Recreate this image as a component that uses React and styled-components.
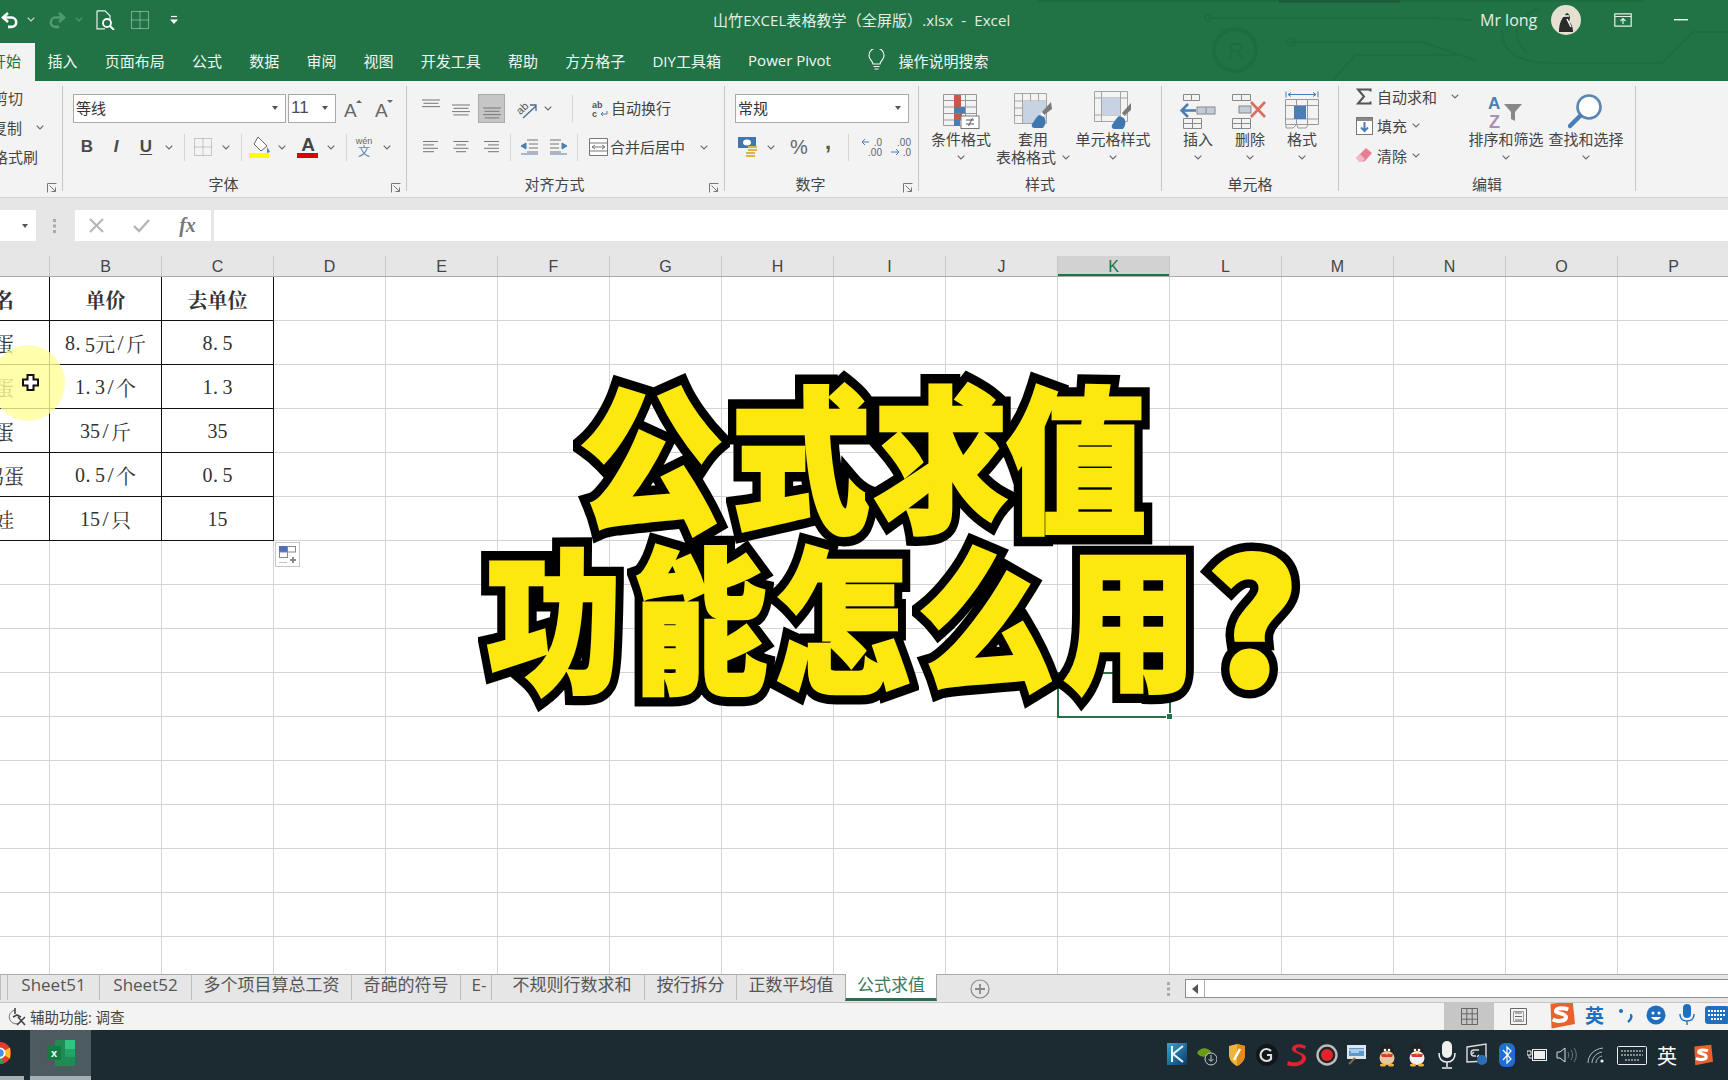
import React from 'react';
import styled, { createGlobalStyle } from 'styled-components';

const CJK = '"Open Sans", "Noto Sans CJK SC", sans-serif';
const Global = createGlobalStyle`
  html, body { margin: 0; padding: 0; background: #fff; }
  body { font-family: ${CJK}; }
`;

const Page = styled.div`
  position: relative; width: 1728px; height: 1080px; overflow: hidden;
  display: flex; flex-direction: column; background: #fff;
`;

/* ---------- title ---------- */
const GreenTop = styled.div`position: relative; background: #217346; height: 81px; display: flex; flex-direction: column; flex: none;`;
const Circuit = styled.svg`position: absolute; right: 0; top: 0; pointer-events: none;`;
const TitleBar = styled.div`position: relative; height: 43px; box-sizing: border-box; padding-bottom: 4px; display: flex; align-items: center; color: #e4efe8; font-size: 15px;`;
const Qat = styled.div`display: flex; align-items: center; width: 713px; flex: none;`;
const QatSlot = styled.div`width: ${p => p.$w}px; display: flex; justify-content: center; align-items: center; flex: none;`;
const DocTitle = styled.div`white-space: pre; width: 767px; flex: none; letter-spacing: .1px;`;
const UserName = styled.div`width: 71px; flex: none; font-size: 16px;`;
const WinBtn = styled.div`flex: none; width: ${p => p.$w}px; display: flex; justify-content: center;`;

const TabBar = styled.div`position: relative; height: 38px; display: flex; align-items: center; color: #f2f7f4; font-size: 15px;`;
const HomeTab = styled.div`width: 35px; height: 38px; background: #f3f3f3; color: #217346; overflow: hidden; display: flex; justify-content: flex-end; align-items: center; padding: 0 14px 4px 0; box-sizing: border-box; white-space: nowrap; flex: none; margin-right: -1px;`;
const MenuItem = styled.div`padding: 0 13.6px 4px; white-space: nowrap;`;
const SearchHint = styled.div`display: flex; align-items: center; gap: 13px; margin-left: 24px; padding-bottom: 4px; white-space: nowrap;`;

/* ---------- ribbon ---------- */
const Ribbon = styled.div`background: #f3f3f3; border-bottom: 1px solid #d4d4d4; display: flex; padding-top: 5px; flex: none; height: 111px; font-size: 15px; color: #444;`;
const Group = styled.div`position: relative; width: ${p => p.$w}px; height: 105px; flex: none; border-right: 1px solid #c6c6c6; box-sizing: border-box; display: flex; flex-direction: column;`;
const GroupBody = styled.div`flex: 1; min-height: 0; display: flex; flex-direction: ${p => p.$row ? 'row' : 'column'}; padding-left: ${p => p.$pl || 0}px; padding-top: ${p => p.$pt || 0}px;`;
const GroupLabel = styled.div`height: 10px; line-height: 10px; margin-bottom: 2px; text-align: center; padding-right: ${p => p.$launcher ? 22 : 0}px; color: #444; font-size: 15px; white-space: nowrap;`;
const Launcher = styled.svg`position: absolute; right: 5px; bottom: -2px;`;
const ToolRow = styled.div`display: flex; align-items: center; height: ${p => p.$h}px; flex: none; margin-top: ${p => p.$mt || 0}px;`;
const Slot = styled.div`width: ${p => p.$w}px; flex: none; display: flex; align-items: center; justify-content: center; height: 100%;`;
const Sep = styled.div`width: ${p => p.$w}px; flex: none; height: 27px; position: relative; &::after { content: ''; position: absolute; left: 50%; top: 0; bottom: 0; width: 1px; background: #d6d6d6; }`;
const Combo = styled.div`width: ${p => p.$w}px; height: 29px; box-sizing: border-box; flex: none; border: 1px solid #a9a9a9; background: #fff; display: flex; align-items: center; justify-content: space-between; padding: 0 7px 2px 2px; margin-right: 2px; font-size: 15px; color: #333;`;
const Caret = styled.span`width: 0; height: 0; border-left: 3.5px solid transparent; border-right: 3.5px solid transparent; border-top: 4px solid #555;`;
const ClipStack = styled.div`margin-top: -3px; display: flex; flex-direction: column;`;
const ClipRow = styled.div`height: 29.5px; display: flex; align-items: center; justify-content: flex-end; gap: 9px; white-space: nowrap; padding-right: ${p => p.$pr}px;`;
const Letter = styled.span`font-family: "Liberation Sans", sans-serif; font-size: 17px; color: #4a4a4a; font-weight: ${p => p.$b ? 700 : 400}; font-style: ${p => p.$i ? 'italic' : 'normal'}; text-decoration: ${p => p.$u ? 'underline' : 'none'}; text-underline-offset: 2px;`;
const Active = styled.div`width: 27px; height: 29px; background: #c6c6c6; border: 1px solid #ababab; box-sizing: border-box; display: flex; align-items: center; justify-content: center;`;
const TextBtn = styled.div`display: flex; align-items: center; height: 100%; padding-bottom: 2px; box-sizing: border-box; white-space: nowrap; color: #444;`;
const Big = styled.div`width: ${p => p.$w}px; flex: none; display: flex; flex-direction: column; align-items: center; margin-right: ${p => p.$mr || 0}px;`;
const BigIcon = styled.div`height: 43px; margin-bottom: 1px; display: flex; align-items: flex-end; justify-content: center;`;
const BigLine = styled.div`height: 18px; line-height: 18px; white-space: nowrap; display: flex; align-items: center; gap: 6px; color: #444;`;
const Stack = styled.div`width: 116px; flex: none; margin-top: -1.5px; display: flex; flex-direction: column;`;
const StackRow = styled.div`height: 24px; display: flex; align-items: center; margin-bottom: 5.3px; white-space: nowrap;`;
const StackIcon = styled.div`width: 26px; display: flex; justify-content: center; flex: none;`;
const Percent = styled.span`font-family: "Liberation Sans", sans-serif; font-size: 20px; color: #666;`;
const Comma = styled(Percent)`font-weight: 700; position: relative; top: -5px; font-size: 22px; color: #555;`;

/* ---------- formula bar ---------- */
const Formula = styled.div`height: 58px; background: #e6e6e6; box-sizing: border-box; padding: 12px 0 15px; display: flex; flex: none; align-items: stretch;`;
const NameBox = styled.div`width: 36px; background: #fff; display: flex; align-items: center; justify-content: flex-end; padding-right: 8px; box-sizing: border-box; flex: none;`;
const Grip = styled.div`width: 38.5px; flex: none; display: flex; justify-content: center; align-items: center;`;
const FxBox = styled.div`width: 136px; flex: none; background: #fff; display: flex; align-items: center; color: #a8a8a8;`;
const FxBtn = styled.div`width: ${p => p.$w}px; display: flex; justify-content: center; flex: none;`;
const Fx = styled.span`font-family: "Liberation Serif", serif; font-style: italic; font-weight: 700; font-size: 20px; color: #777;`;
const FormulaInput = styled.div`flex: 1; background: #fff; margin-left: 3.5px;`;

/* ---------- sheet ---------- */
const HeaderRow = styled.div`height: 21px; flex: none; box-sizing: border-box; background: #e6e6e6; border-bottom: 1px solid #ababab; display: grid; grid-template-columns: 50px repeat(15, 112px); font-family: "Liberation Sans", sans-serif; font-size: 16px; color: #444;`;
const HeadCell = styled.div`box-sizing: border-box; padding-top: 2px; border-right: 1px solid #c6c6c6; display: flex; align-items: center; justify-content: center; background: ${p => p.$on ? '#d2d2d2' : 'transparent'}; box-shadow: ${p => p.$on ? 'inset 0 -2px 0 #217346' : 'none'}; color: ${p => p.$on ? '#217346' : '#444'};`;
const Sheet = styled.div`flex: 1; min-height: 0; overflow: hidden; display: grid; grid-template-columns: 50px repeat(15, 112px); grid-auto-rows: 44px; align-content: start; background: #fff; font-family: "Liberation Serif", "Noto Serif CJK SC", "Noto Sans CJK SC", serif; font-size: 20px; color: #333;`;
const Cell = styled.div`
  box-sizing: border-box; position: relative; padding-top: 1px;
  border-right: 1px solid ${p => p.$t ? '#111' : '#d4d4d4'};
  border-bottom: 1px solid ${p => p.$t ? '#111' : '#d4d4d4'};
  display: flex; align-items: center; justify-content: ${p => p.$clip ? 'flex-end' : 'center'};
  overflow: ${p => p.$clip ? 'hidden' : 'visible'};
  white-space: nowrap; font-weight: ${p => p.$b ? 700 : 400}; padding-right: ${p => p.$clip ? p.$clip : 0}px;
`;
const Dot = styled.span`display: inline-block; width: .5em; text-align: left; padding-left: .02em; box-sizing: border-box;`;
const Slash = styled.span`display: inline-block; width: .5em; text-align: center; font-size: 1.1em; line-height: 1;`;
const SelBox = styled.div`position: absolute; left: -1px; top: -1px; border: 2px solid #217346; box-sizing: content-box; width: 110px; height: 42px; pointer-events: none; z-index: 2;
  &::after { content: ''; position: absolute; right: -4px; bottom: -4px; width: 5px; height: 5px; background: #217346; border: 1px solid #fff; }`;
const Halo = styled.div`position: absolute; left: -9px; top: 345px; width: 74px; height: 76px; border-radius: 50%; background: radial-gradient(circle, rgba(255,255,150,.8) 60%, rgba(255,255,170,.6) 100%); pointer-events: none;`;
const CursorMark = styled.svg`position: absolute; left: 22px; top: 374px;`;
const FlashFill = styled.div`position: absolute; left: 275px; top: 542px; width: 25px; height: 25px; box-sizing: border-box; background: #fff; border: 1px solid #c6c6c6; display: flex; align-items: center; justify-content: center;`;

/* ---------- poster title ---------- */
const Poster = styled.div`position: absolute; left: 470px; top: 366px; width: 850px; display: flex; flex-direction: column; pointer-events: none; z-index: 3;`;
const PosterLine = styled.div`display: flex; height: ${p => p.$h}px; padding-left: ${p => p.$pl}px;`;
const Glyph = styled.span`
  position: relative; display: block; width: ${p => p.$w}px; height: 170px; flex: none; text-align: center;
  font-family: "Noto Sans CJK SC", sans-serif; font-weight: 900; font-size: ${p => p.$size || 142}px; line-height: 170px;
  color: #000; -webkit-text-stroke: 21px #000; stroke-linejoin: round;
  transform: scale(${p => p.$sx || 1}, ${p => p.$sy || 1.08});
  &::after { content: attr(data-t); position: absolute; left: 0; right: 0; top: 0; color: #fce80e; -webkit-text-stroke: 4px #fce80e; }
`;

/* ---------- tabs / status / taskbar ---------- */
const SheetTabs = styled.div`height: 29px; flex: none; box-sizing: border-box; background: #e6e6e6; border-top: 1px solid #ababab; border-bottom: 1px solid #c6c6c6; display: flex; align-items: center; font-size: 17px; color: #555; position: relative; z-index: 1;`;
const SheetTab = styled.div`height: 25px; margin-top: -2px; box-sizing: border-box; border-left: 1px solid #bdbdbd; padding-left: ${p => p.$pl || 0}px; white-space: nowrap; line-height: 20px; width: ${p => p.$w}px; flex: none; text-align: center;`;
const ActiveTab = styled.div`height: 27px; align-self: flex-start; margin-top: -1px; box-sizing: border-box; width: 92px; flex: none; text-align: center; background: #fff; border: 1px solid #ababab; border-top: 0; border-bottom: 3px solid #2d6d51; color: #3b7a5c; line-height: 21px;`;
const AddTab = styled.div`width: 72px; flex: none; display: flex; justify-content: flex-end; padding-right: 19px; box-sizing: border-box;`;
const ScrollGrip = styled.div`width: 176px; flex: none; display: flex; justify-content: flex-end; padding-right: 15px; box-sizing: border-box;`;
const ScrollBar = styled.div`flex: 1; height: 19px; box-sizing: border-box; background: #fff; border: 1px solid #8e8e8e; display: flex; margin-right: -4px;`;
const ScrollArrow = styled.div`width: 18px; border-right: 1px solid #ababab; display: flex; align-items: center; justify-content: center;`;
const Status = styled.div`position: relative; height: 27px; flex: none; background: #f3f3f3; display: flex; align-items: center; font-size: 14.5px; color: #444;`;
const StatusLeft = styled.div`flex: none; width: 1444px; display: flex; align-items: center; padding-left: 8px; gap: 3px; box-sizing: border-box;`;
const ViewBtn = styled.div`width: ${p => p.$w}px; height: 27px; display: flex; align-items: center; justify-content: center; background: ${p => p.$on ? '#c6c6c6' : 'transparent'}; flex: none;`;
const Ime = styled.div`position: absolute; right: -8px; top: -6px; width: 190px; height: 36px; display: flex; align-items: center;`;
const ImeText = styled.span`font-size: 19px; font-weight: 700; color: #1f6fc0; margin-left: 10px; margin-right: 12px;`;
const ImeSlot = styled.div`width: ${p => p.$w}px; flex: none; display: flex; justify-content: center;`;
const Taskbar = styled.div`height: 50px; flex: none; background: #1c2a31; display: flex; align-items: center; position: relative;`;
const TaskBtn = styled.div`width: ${p => p.$w}px; height: 50px; flex: none; background: ${p => p.$on ? '#4d5a60' : 'transparent'}; border-bottom: 4px solid #a4b0b4; box-sizing: border-box; display: flex; align-items: center; justify-content: center; overflow: hidden; margin-right: ${p => p.$mr || 0}px;`;
const ChromeBtn = styled(TaskBtn)`justify-content: flex-start; & > svg { margin-left: -12px; flex: none; }`;
const Tray = styled.div`margin-left: auto; display: flex; align-items: center; padding-right: 6px;`;
const TraySlot = styled.div`width: ${p => p.$w || 30}px; flex: none; display: flex; justify-content: center; align-items: center; color: #fff; font-size: 20px;`;

/* ---------- icons ---------- */
const Chev = ({ c = '#666' }) => <svg width="8" height="5" viewBox="0 0 8 5"><path d="M.7.7 4 4 7.3.7" fill="none" stroke={c} strokeWidth="1.1" /></svg>;
const Undo = ({ c = '#fff', flip }) => <svg width="20" height="18" viewBox="0 0 20 18" style={flip ? { transform: 'scaleX(-1)' } : undefined}><path d="M8 2 3 6.5 8 11M3 6.5h8.5a4.7 4.7 0 0 1 0 9.4H8" fill="none" stroke={c} strokeWidth="2.6" /></svg>;
const Launch = () => <Launcher width="10" height="10" viewBox="0 0 10 10"><path d="M.5 9.5v-9h9M2.5 2.5l6 6M8.5 4.5v4h-4" fill="none" stroke="#777" strokeWidth="1" /></Launcher>;
const LINE_SETS = {
  l: [15, 11, 15, 11], c: [15, 10, 15, 10], r: [15, 11, 15, 11],
};
const StepLines = ({ at, n }) => <svg width="18" height="20" viewBox="0 0 18 20">{Array.from({ length: n }, (_, i) => <rect key={i} x={i % 2 ? 1.5 : 0} y={at + i * 3.3} width={i % 2 ? 15 : 18} height="1" fill="#777" />)}</svg>;
const SideLines = ({ kind }) => <svg width="18" height="16" viewBox="0 0 18 16">{LINE_SETS[kind].map((w, i) => <rect key={i} x={kind === 'l' ? 1 : kind === 'c' ? (18 - w) / 2 : 17 - w} y={2 + i * 3.4} width={w} height="1" fill="#777" />)}</svg>;
const Grid3 = ({ c = '#888', dash }) => <svg width="18" height="18" viewBox="0 0 18 18"><path d="M.5.5h17v17H.5zM9 .5v17M.5 9h17" fill="none" stroke={c} strokeDasharray={dash ? '1 1' : undefined} /></svg>;
const StepA = ({ up }) => <svg width="20" height="20" viewBox="0 0 20 20"><text x="0" y="18" fontFamily="Liberation Sans" fontSize="19" fill="#666">A</text><path d={up ? 'M12 4h6l-3-3z' : 'M12 1h6l-3 3z'} fill="#666" /></svg>;

const CondIcon = () => <svg width="37" height="35" viewBox="0 0 37 35"><path d="M.5.5h33v31H.5zM.5 6.5h33M.5 13h33M.5 19.5h33M.5 26h33M11.5.5v31M22.5.5v31" fill="none" stroke="#999" /><rect x="11" y="1" width="7" height="6" fill="#c55a4a" /><rect x="11" y="7" width="7" height="6" fill="#c55a4a" /><rect x="11" y="13" width="11" height="6.500" fill="#4a7eb5" /><rect x="11" y="19.500" width="8" height="6.500" fill="#c55a4a" /><rect x="11" y="26" width="6" height="6" fill="#4a7eb5" /><rect x="18" y="22" width="18" height="12.500" fill="#fff" stroke="#777" /><path d="M23 26h8M23 30h8M29.500 24l-4 8" stroke="#555" fill="none" /></svg>;
const TableIcon = () => <svg width="39" height="36" viewBox="0 0 39 36"><path d="M.5.5h32v30H.5zM.5 8h32M.5 15h32M.5 22.500h32M8.500.5v30M16.500.5v30M24.500.5v30" fill="none" stroke="#a5a5a5" /><rect x="9" y="8" width="23" height="22" fill="#c7d2e2" /><path d="M37 9 28 19l2 3 8-6z" fill="#7a7a7a" /><path d="M25 22c-3 2-4 5-7 9-1 3 1 4 3 4h8c3-4 3-7 1-11z" fill="#3f77b0" /><path d="M27 20l3 3" stroke="#fff" strokeWidth="2" /></svg>;
const StyleIcon = () => <svg width="38" height="38" viewBox="0 0 38 38"><path d="M.5.5h33v30H.5zM.5 7h33M7.500.5v30M26.500.5v30M.5 24h33" fill="none" stroke="#a5a5a5" /><rect x="8" y="7" width="18" height="17" fill="#c7d2e2" /><path d="M37 12 28 22l2 3 7-6z" fill="#7a7a7a" /><path d="M25 25c-3 2-4 5-7 9-1 3 1 4 3 4h8c3-4 3-7 1-11z" fill="#3f77b0" /><path d="M27 23l3 3" stroke="#fff" strokeWidth="2" /></svg>;
const InsertIcon = () => <svg width="36" height="35" viewBox="0 0 36 35"><path d="M3.500.5h8v6h-8zM11.500.5h8v6h-8zM3.500 24.500h18v10h-18zM12.500 24.500v10M3.500 29.500h18" fill="none" stroke="#888" /><rect x="17" y="13" width="18" height="7" fill="#c3cdda" stroke="#888" /><path d="M26 13v7" stroke="#888" /><path d="M8 10 1.500 16.500 8 23M2 16.500h14" fill="none" stroke="#4a7eb5" strokeWidth="2.600" /></svg>;
const DeleteIcon = () => <svg width="36" height="35" viewBox="0 0 36 35"><path d="M.5.5h9v6h-9zM9.500.5h9v6h-9zM.5 24.500h18v10H.5zM9.500 24.500v10M.5 29.500h18" fill="none" stroke="#888" /><rect x="7" y="12" width="12" height="7" fill="#c3cdda" stroke="#888" /><path d="M19 8 33 23M33 8 19 23" stroke="#d9705f" strokeWidth="2.600" /></svg>;
const FormatIcon = () => <svg width="35" height="38" viewBox="0 0 35 38"><path d="M1 .5v6M33 .5v6M3 3.500h28M3 3.500l3-2M3 3.500l3 2M31 3.500l-3-2M31 3.500l-3 2" fill="none" stroke="#4a7eb5" /><path d="M.5 8.500h33v25H.5zM11.500 8.500v25M22.500 8.500v25M.5 14.500h33M.5 28h33" fill="none" stroke="#999" /><rect x="9" y="15" width="12" height="13" fill="#4a7eb5" /><path d="M1 34v3h7l3-3M12 34l1 3h8l2-3" fill="none" stroke="#999" /></svg>;
const SortIcon = () => <svg width="36" height="34" viewBox="0 0 36 34"><text x="0" y="14" fontFamily="Liberation Sans" fontSize="17" fontWeight="700" fill="#4a7eb5">A</text><text x="1" y="33" fontFamily="Liberation Sans" fontSize="18" fontWeight="700" fill="#a98fb6">Z</text><path d="M16 9h18l-7 8v9l-4-2v-7z" fill="#888" /></svg>;
const FindIcon = () => <svg width="36" height="36" viewBox="0 0 36 36"><circle cx="21" cy="14" r="11.500" fill="#fff" stroke="#5a86b0" strokeWidth="2.600" /><path d="M12 23 2 33" stroke="#4a7eb5" strokeWidth="4.500" strokeLinecap="round" /></svg>;
const Sigma = () => <svg width="16" height="17" viewBox="0 0 16 17"><path d="M14.500 3.500V1.500H2L8 8.500 2 15.500h12.500v-2" fill="none" stroke="#555" strokeWidth="2" /></svg>;
const FillDown = () => <svg width="17" height="18" viewBox="0 0 17 18"><rect x=".5" y=".5" width="16" height="17" fill="#fff" stroke="#777" /><rect x="1" y="1" width="15" height="3" fill="#888" /><path d="M8.500 5v9M5 10.500l3.500 3.500 3.500-3.500" fill="none" stroke="#4a7eb5" strokeWidth="2" /></svg>;
const Eraser = () => <svg width="18" height="16" viewBox="0 0 18 16"><path d="M11 1l6 5-7 8-4 1-5-4z" fill="#e57f92" /><path d="M1 11l4-4 5 5-3 3H4z" fill="#f3b8c3" /></svg>;

const QQ = ({ dark }) => <svg width="20" height="24" viewBox="0 0 20 24"><ellipse cx="10" cy="8" rx="6.500" ry="7.500" fill="#222" /><ellipse cx="10" cy="15" rx="7.500" ry="7" fill={dark ? '#f2f2f2' : '#e8c79f'} /><path d="M4 11h12l-1 3H5z" fill="#d83a3a" /><circle cx="8" cy="7" r="1.300" fill="#fff" /><circle cx="12" cy="7" r="1.300" fill="#fff" /><path d="M7 10h6l-3 2z" fill="#f3b13b" /><ellipse cx="6" cy="22" rx="3" ry="1.500" fill="#f3b13b" /><ellipse cx="14" cy="22" rx="3" ry="1.500" fill="#f3b13b" /></svg>;
const SLogo = ({ size = 26 }) => <svg width={size} height={size} viewBox="0 0 26 26"><path d="M4 3 24 1l2 20-21 4z" fill="#e8622c" /><path d="M20 8c-3-1-10-2-11 1s9 2 9 6-8 4-12 2" fill="none" stroke="#fff" strokeWidth="3.600" /></svg>;

const trayIcons = [
  <svg width="20" height="24" viewBox="0 0 20 24"><defs><linearGradient id="kg" x1="0" y1="0" x2="1" y2="1"><stop offset="0" stopColor="#33a7d8" /><stop offset="1" stopColor="#0b3a66" /></linearGradient></defs><rect width="20" height="22" fill="url(#kg)" /><path d="M5 3v16M16 3 6 11l10 8" fill="none" stroke="#eaf6fb" strokeWidth="2" /></svg>,
  <svg width="20" height="22" viewBox="0 0 20 22"><path d="M0 9c3-6 11-6 14-1-3 6-11 6-14 1z" fill="#6c9a1a" /><circle cx="14" cy="15" r="6" fill="#1c2a31" stroke="#ccc" /><path d="M14 11v6M11.500 15l2.500 2.500 2.500-2.500" fill="none" stroke="#ccc" /></svg>,
  <svg width="18" height="22" viewBox="0 0 18 22"><path d="M1 2 9 0l8 2v9c0 5-4 9-8 11-4-2-8-6-8-11z" fill="#efb53a" /><path d="M9 0l8 2v9c0 5-4 9-8 11z" fill="#e58a1f" /><path d="M12 5 6 16" stroke="#fff" strokeWidth="2.500" /></svg>,
  <svg width="22" height="22" viewBox="0 0 22 22"><circle cx="11" cy="11" r="11" fill="#10171b" /><path d="M15 7a6 6 0 1 0 0 8v-4h-4" fill="none" stroke="#ddd" strokeWidth="2.200" /></svg>,
  <svg width="22" height="24" viewBox="0 0 22 24"><path d="M20 3C14 0 6 1 6 6s11 4 10 9-9 5-14 3l-1 4c7 3 17 1 19-6 1-7-11-6-10-10 0-2 5-2 9 0z" fill="#e0212f" /></svg>,
  <svg width="22" height="22" viewBox="0 0 22 22"><circle cx="11" cy="11" r="9.500" fill="#222" stroke="#bbb" strokeWidth="2.400" /><circle cx="11" cy="11" r="6" fill="#e2242a" /></svg>,
  <svg width="20" height="20" viewBox="0 0 20 20"><rect width="19" height="14" fill="#dde7ef" /><rect x="2" y="3" width="15" height="8" fill="#5d99cc" /><path d="M2 5h15M4 7h8" stroke="#fff" /><path d="M2 19l6-6" stroke="#8a6a40" strokeWidth="2" /></svg>,
  <QQ />,
  <QQ dark />,
  <svg width="18" height="28" viewBox="0 0 18 28"><rect x="4" y="0" width="10" height="17" rx="5" fill="#f0f0f0" /><path d="M1 12c0 6 3 9 8 9s8-3 8-9M9 21v5M4 27h10" fill="none" stroke="#f0f0f0" strokeWidth="1.500" /></svg>,
  <svg width="22" height="24" viewBox="0 0 22 24"><path d="M1 4 20 1v17L1 19z" fill="none" stroke="#ddd" strokeWidth="1.400" /><path d="M13 7H8a3 3 0 0 0 0 6h2M8 9l-2 2M11 14l2-2" fill="none" stroke="#ddd" strokeWidth="1.300" /><circle cx="16" cy="17" r="5" fill="#2d6db5" /></svg>,
  <svg width="16" height="24" viewBox="0 0 16 24"><rect width="16" height="24" rx="6" fill="#1e6fd0" /><path d="M4 7l8 9-4 4V4l4 4-8 9" fill="none" stroke="#fff" strokeWidth="1.200" /></svg>,
  <svg width="20" height="14" viewBox="0 0 20 14"><rect x="5.500" y="1.500" width="14" height="11" fill="none" stroke="#eee" /><rect x="7" y="3" width="11" height="8" fill="#eee" /><path d="M0 3h4v4H0zM2 7v3h3" fill="none" stroke="#eee" /></svg>,
  <svg width="22" height="18" viewBox="0 0 22 18"><path d="M1 6h3l5-4v14l-5-4H1z" fill="none" stroke="#ddd" /><path d="M12 6c1 2 1 4 0 6M15 4c2 3 2 7 0 10M18 2c3 4 3 10 0 14" fill="none" stroke="#6f7b80" /></svg>,
  <svg width="20" height="18" viewBox="0 0 20 18"><path d="M1 17C1 9 7 3 16 2M5 17c0-5 4-10 10-11M9 17c0-3 2-6 6-7" fill="none" stroke="#bbb" /><circle cx="15" cy="15" r="1.600" fill="#eee" /></svg>,
  <svg width="30" height="19" viewBox="0 0 30 19"><rect x=".5" y=".5" width="29" height="18" rx="1" fill="none" stroke="#eee" /><path d="M4 5h22M4 9h22M8 14h14" stroke="#eee" strokeDasharray="2 1" fill="none" /></svg>,
];

const COLS = 'BCDEFGHIJKLMNOP'.split('');
const TABLE = [
  ['名', '单价', '去单位'],
  ['蛋', <>8<Dot>.</Dot>5元<Slash>/</Slash>斤</>, <>8<Dot>.</Dot>5</>],
  ['蛋', <>1<Dot>.</Dot>3<Slash>/</Slash>个</>, <>1<Dot>.</Dot>3</>],
  ['蛋', <>35<Slash>/</Slash>斤</>, '35'],
  ['鸡蛋', <>0<Dot>.</Dot>5<Slash>/</Slash>个</>, <>0<Dot>.</Dot>5</>],
  ['娃', <>15<Slash>/</Slash>只</>, '15'],
];

const SheetCells = () => {
  const cells = [];
  for (let r = 0; r < 16; r++) {
    for (let c = 0; c < 16; c++) {
      const inTable = r < 6 && c < 3;
      const sel = r === 9 && c === 10;
      cells.push(
        <Cell key={r + '-' + c} $t={inTable} $b={inTable && r === 0} $clip={inTable && c === 0 ? (r === 4 ? 25 : 35) : 0}>
          {inTable ? TABLE[r][c] : null}
          {sel ? <SelBox /> : null}
        </Cell>
      );
    }
  }
  return cells;
};

const Line1 = [['公', 158, 1, 1.1], ['式', 140, .98, 1.1], ['求', 132, .94, 1.1], ['值', 148, .98, 1.1]];
const Line2 = [['功', 150, .95, 1.1], ['能', 142, .94, 1.1], ['怎', 142, .94, 1.1], ['么', 146, .95, 1.1], ['用', 140, .93, 1.08], ['?', 106, 1, 1]];

export default function App() {
  return (
    <Page>
      <Global />
      <GreenTop>
        <Circuit width="720" height="81" viewBox="0 0 720 81" fill="none">
          <path d="M30 .8h606" stroke="#1d6a40" strokeWidth="2" />
          <path d="M271 1h121" stroke="#195a38" strokeWidth="3" />
          <g stroke="#1e6c42" strokeWidth="2">
            <path d="M200 18h223l40 2M282 42h132l53 18M325 80l22-25h102M494 30c0 25 20 33 50 33h110l31-31h35M530 8c-20 10-30 30-10 45" />
            <circle cx="227" cy="50" r="21" strokeWidth="4" />
            <circle cx="200" cy="18" r="3" />
            <circle cx="283" cy="42" r="4" />
          </g>
          <text x="220" y="58" fontFamily="Liberation Sans" fontSize="22" fill="#1e6c42">R</text>
        </Circuit>
        <TitleBar>
          <Qat>
            <QatSlot $w={20}><Undo /></QatSlot>
            <QatSlot $w={22}><Chev c="#cfe2d6" /></QatSlot>
            <QatSlot $w={30}><Undo c="#4f9a73" flip /></QatSlot>
            <QatSlot $w={14}><Chev c="#4f9a73" /></QatSlot>
            <QatSlot $w={40}><svg width="20" height="20" viewBox="0 0 20 20"><path d="M1 .8h8l5 5v5M1 .8v18h8" fill="none" stroke="#e9f2ec" strokeWidth="1.200" /><circle cx="11" cy="13" r="4" fill="none" stroke="#fff" strokeWidth="1.800" /><path d="M14 16l4 4" stroke="#fff" strokeWidth="2" /></svg></QatSlot>
            <QatSlot $w={27}><Grid3 c="#cfe2d6" dash /></QatSlot>
            <QatSlot $w={42}><svg width="8" height="10" viewBox="0 0 8 10"><path d="M1 1.500h6" stroke="#fff" strokeWidth="1.200" /><path d="M0 4.500h8L4 9z" fill="#fff" /></svg></QatSlot>
          </Qat>
          <DocTitle>山竹EXCEL表格教学（全屏版）.xlsx  -  Excel</DocTitle>
          <UserName>Mr long</UserName>
          <WinBtn $w={30}><svg width="30" height="30" viewBox="0 0 30 30"><circle cx="15" cy="15" r="15" fill="#e4e0d2" /><path d="M8 27c0-9 3-15 8-19 4 2 3 6 2 9 3 2 4 6 4 10z" fill="#2a2a2a" /><path d="M12 11h6M16 14l4 8" stroke="#fff" strokeWidth="1.400" /></svg></WinBtn>
          <WinBtn $w={84}><svg width="18" height="14" viewBox="0 0 18 14"><path d="M.8.8h16.400v12.400H.8zM.8 3.500h16.400" fill="none" stroke="#e4efe8" strokeWidth="1.200" /><path d="M9 11V6M6.500 8 9 5.500 11.500 8" fill="none" stroke="#e4efe8" strokeWidth="1.200" /></svg></WinBtn>
          <WinBtn $w={32}><svg width="14" height="2" viewBox="0 0 14 2"><rect width="14" height="1.400" fill="#fff" /></svg></WinBtn>
        </TitleBar>
        <TabBar>
          <HomeTab>开始</HomeTab>
          {['插入', '页面布局', '公式', '数据', '审阅', '视图', '开发工具', '帮助', '方方格子', 'DIY工具箱', 'Power Pivot'].map(t => <MenuItem key={t}>{t}</MenuItem>)}
          <SearchHint>
            <svg width="17" height="22" viewBox="0 0 17 22"><path d="M5 15c0-3-4-4-4-8.500a7.500 7.500 0 0 1 15 0C16 11 12 12 12 15zM5.500 17.500h6M6.500 20h4" fill="none" stroke="#f2f7f4" strokeWidth="1.200" /></svg>
            操作说明搜索
          </SearchHint>
        </TabBar>
      </GreenTop>

      <Ribbon>
        <Group $w={63}>
          <GroupBody>
            <ClipStack>
              <ClipRow $pr={39}>剪切</ClipRow>
              <ClipRow $pr={13}><span>复制</span><Slot $w={18}><Chev /></Slot></ClipRow>
              <ClipRow $pr={24}>格式刷</ClipRow>
            </ClipStack>
          </GroupBody>
          <Launch />
        </Group>

        <Group $w={344}>
          <GroupBody $pl={10} $pt={8}>
            <ToolRow $h={29}>
              <Combo $w={213}><span>等线</span><Caret /></Combo>
              <Combo $w={48}><Letter>11</Letter><Caret /></Combo>
              <Slot $w={32}><StepA up /></Slot>
              <Slot $w={29}><StepA /></Slot>
            </ToolRow>
            <ToolRow $h={20} $mt={14}>
              <Slot $w={28}><Letter $b>B</Letter></Slot>
              <Slot $w={30}><Letter $i $b>I</Letter></Slot>
              <Slot $w={30}><Letter $u $b>U</Letter></Slot>
              <Slot $w={16}><Chev /></Slot>
              <Sep $w={14} />
              <Slot $w={24}><Grid3 c="#999" dash /></Slot>
              <Slot $w={22}><Chev /></Slot>
              <Sep $w={8} />
              <Slot $w={30}><svg width="22" height="22" viewBox="0 0 22 22"><path d="M9 1l9 9-6 5-7-7z" fill="#fff" stroke="#666" /><path d="M18 11l3 5-3 1z" fill="#4a7eb5" /><rect y="17" width="20" height="5" fill="#ffff00" /></svg></Slot>
              <Slot $w={14}><Chev /></Slot>
              <Slot $w={4} />
              <Slot $w={30}><svg width="22" height="22" viewBox="0 0 22 22"><text x="11" y="15" textAnchor="middle" fontFamily="Liberation Sans" fontWeight="700" fontSize="19" fill="#444">A</text><rect y="17" width="21" height="5" fill="#d9000e" /></svg></Slot>
              <Slot $w={16}><Chev /></Slot>
              <Sep $w={14} />
              <Slot $w={22}><svg width="18" height="22" viewBox="0 0 18 22"><text x="9" y="8" textAnchor="middle" fontFamily="Liberation Sans" fontSize="9" fill="#666">wén</text><text x="9" y="20" textAnchor="middle" fontFamily="Noto Sans CJK SC" fontSize="12" fill="#5a86b0">文</text></svg></Slot>
              <Slot $w={24}><Chev /></Slot>
            </ToolRow>
          </GroupBody>
          <GroupLabel $launcher>字体</GroupLabel>
          <Launch />
        </Group>

        <Group $w={318}>
          <GroupBody $pl={15} $pt={8}>
            <ToolRow $h={29}>
              <Slot $w={18}><StepLines at={.5} n={3} /></Slot>
              <Slot $w={12} />
              <Slot $w={18}><StepLines at={5.5} n={4} /></Slot>
              <Slot $w={8} />
              <Active><StepLines at={8.5} n={4} /></Active>
              <Slot $w={9} />
              <Slot $w={26}><svg width="22" height="20" viewBox="0 0 22 20"><text x="2" y="14" transform="rotate(-45 6 12)" fontFamily="Liberation Sans" fontSize="11" fill="#555">ab</text><path d="M7 19 20 7M14 6h6v6" fill="none" stroke="#4a6a8a" strokeWidth="1.300" /></svg></Slot>
              <Slot $w={16}><Chev /></Slot>
              <Sep $w={32} />
              <Slot $w={23}><svg width="18" height="18" viewBox="0 0 18 18"><text x="1" y="8" fontFamily="Liberation Sans" fontSize="9" fontWeight="700" fill="#555">ab</text><text x="1" y="17" fontFamily="Liberation Sans" fontSize="9" fontWeight="700" fill="#555">c</text><path d="M16 11v3h-6M12 12l-2 2 2 2" fill="none" stroke="#4a7eb5" /></svg></Slot>
              <TextBtn>自动换行</TextBtn>
            </ToolRow>
            <ToolRow $h={20} $mt={14}>
              <Slot $w={18}><SideLines kind="l" /></Slot>
              <Slot $w={12} />
              <Slot $w={18}><SideLines kind="c" /></Slot>
              <Slot $w={12} />
              <Slot $w={18}><SideLines kind="r" /></Slot>
              <Sep $w={20} />
              <Slot $w={18}><svg width="18" height="16" viewBox="0 0 18 16"><path d="M7 1h11M9 5h9M9 9h9M7 13h11" stroke="#777" /><path d="M6 4 1 7l5 3z" fill="#4a7eb5" stroke="#4a7eb5" /><path d="M1 15h17" stroke="#4a7eb5" /></svg></Slot>
              <Slot $w={12} />
              <Slot $w={18}><svg width="18" height="16" viewBox="0 0 18 16"><path d="M0 1h11M0 5h9M0 9h9M0 13h11" stroke="#777" /><path d="M12 4l5 3-5 3z" fill="#4a7eb5" stroke="#4a7eb5" /><path d="M0 15h17" stroke="#4a7eb5" /></svg></Slot>
              <Sep $w={18} />
              <Slot $w={24}><svg width="19" height="18" viewBox="0 0 19 18"><path d="M.5.5h18v17H.5zM.5 5h18M.5 13h18" fill="#fff" stroke="#777" /><path d="M3 9h13M3 9l3-2M3 9l3 2M16 9l-3-2M16 9l-3 2" fill="none" stroke="#777" /></svg></Slot>
              <TextBtn>合并后居中</TextBtn>
              <Slot $w={38}><Chev /></Slot>
            </ToolRow>
          </GroupBody>
          <GroupLabel $launcher>对齐方式</GroupLabel>
          <Launch />
        </Group>

        <Group $w={194}>
          <GroupBody $pl={10} $pt={8}>
            <ToolRow $h={29}><Combo $w={174}><span>常规</span><Caret /></Combo></ToolRow>
            <ToolRow $h={20} $mt={14}>
              <Slot $w={26}><svg width="22" height="22" viewBox="0 0 22 22"><rect x="1" y="1" width="18" height="11" fill="#3f77b0" /><ellipse cx="10" cy="6.500" rx="4" ry="3" fill="#fff" /><path d="M11 11h9M11 14h9M9 17h9M9 20h9" stroke="#d9b44a" strokeWidth="2" /></svg></Slot>
              <Slot $w={20}><Chev /></Slot>
              <Slot $w={36}><Percent>%</Percent></Slot>
              <Slot $w={22}><Comma>,</Comma></Slot>
              <Sep $w={18} />
              <Slot $w={28}><svg width="22" height="20" viewBox="0 0 22 20"><text x="22" y="9" textAnchor="end" fontFamily="Liberation Sans" fontSize="10" fill="#666">.0</text><text x="22" y="19" textAnchor="end" fontFamily="Liberation Sans" fontSize="10" fill="#666">.00</text><path d="M9 5H2M5 2 2 5l3 3" fill="none" stroke="#4a7eb5" /></svg></Slot>
              <Slot $w={30}><svg width="22" height="20" viewBox="0 0 22 20"><text x="22" y="9" textAnchor="end" fontFamily="Liberation Sans" fontSize="10" fill="#666">.00</text><text x="22" y="19" textAnchor="end" fontFamily="Liberation Sans" fontSize="10" fill="#666">.0</text><path d="M2 15h8M7 12l3 3-3 3" fill="none" stroke="#4a7eb5" /></svg></Slot>
            </ToolRow>
          </GroupBody>
          <GroupLabel $launcher>数字</GroupLabel>
          <Launch />
        </Group>

        <Group $w={243}>
          <GroupBody $row $pl={9}>
            <Big $w={66} $mr={2}><BigIcon><CondIcon /></BigIcon><BigLine>条件格式</BigLine><BigLine><Chev /></BigLine></Big>
            <Big $w={74} $mr={3}><BigIcon><TableIcon /></BigIcon><BigLine>套用</BigLine><BigLine>表格格式<Chev /></BigLine></Big>
            <Big $w={80}><BigIcon><StyleIcon /></BigIcon><BigLine>单元格样式</BigLine><BigLine><Chev /></BigLine></Big>
          </GroupBody>
          <GroupLabel>样式</GroupLabel>
        </Group>

        <Group $w={177}>
          <GroupBody $row $pl={10}>
            <Big $w={52}><BigIcon><InsertIcon /></BigIcon><BigLine>插入</BigLine><BigLine><Chev /></BigLine></Big>
            <Big $w={52}><BigIcon><DeleteIcon /></BigIcon><BigLine>删除</BigLine><BigLine><Chev /></BigLine></Big>
            <Big $w={52}><BigIcon><FormatIcon /></BigIcon><BigLine>格式</BigLine><BigLine><Chev /></BigLine></Big>
          </GroupBody>
          <GroupLabel>单元格</GroupLabel>
        </Group>

        <Group $w={297}>
          <GroupBody $row $pl={12}>
            <Stack>
              <StackRow><StackIcon><Sigma /></StackIcon>自动求和<Slot $w={36}><Chev /></Slot></StackRow>
              <StackRow><StackIcon><FillDown /></StackIcon>填充<Slot $w={18}><Chev /></Slot></StackRow>
              <StackRow><StackIcon><Eraser /></StackIcon>清除<Slot $w={18}><Chev /></Slot></StackRow>
            </Stack>
            <Big $w={78} $mr={2}><BigIcon><SortIcon /></BigIcon><BigLine>排序和筛选</BigLine><BigLine><Chev /></BigLine></Big>
            <Big $w={78}><BigIcon><FindIcon /></BigIcon><BigLine>查找和选择</BigLine><BigLine><Chev /></BigLine></Big>
          </GroupBody>
          <GroupLabel>编辑</GroupLabel>
        </Group>
      </Ribbon>

      <Formula>
        <NameBox><Caret /></NameBox>
        <Grip><svg width="4" height="14" viewBox="0 0 4 14"><rect width="3" height="3" fill="#aaa" /><rect y="5.500" width="3" height="3" fill="#aaa" /><rect y="11" width="3" height="3" fill="#aaa" /></svg></Grip>
        <FxBox>
          <FxBtn $w={44}><svg width="15" height="15" viewBox="0 0 15 15"><path d="M1 1l13 13M14 1 1 14" stroke="#b5b5b5" strokeWidth="2" /></svg></FxBtn>
          <FxBtn $w={46}><svg width="17" height="14" viewBox="0 0 17 14"><path d="M1 7l5 5L16 1" fill="none" stroke="#b5b5b5" strokeWidth="2.400" /></svg></FxBtn>
          <FxBtn $w={46}><Fx>fx</Fx></FxBtn>
        </FxBox>
        <FormulaInput />
      </Formula>

      <HeaderRow>
        <HeadCell />
        {COLS.map(c => <HeadCell key={c} $on={c === 'K'}>{c}</HeadCell>)}
      </HeaderRow>
      <Sheet><SheetCells /></Sheet>

      <Halo />
      <CursorMark width="17" height="17" viewBox="0 0 17 17"><path d="M5.500 1h6v4.500H16v6h-4.500V16h-6v-4.500H1v-6h4.500z" fill="#fff" stroke="#111" strokeWidth="2" /></CursorMark>
      <FlashFill><svg width="18" height="18" viewBox="0 0 18 18"><rect x=".5" y=".5" width="8" height="5.500" fill="#4a6fc0" stroke="#4a6fc0" /><rect x="8.500" y=".5" width="8" height="5.500" fill="#fff" stroke="#888" /><rect x=".5" y="6" width="8" height="5.500" fill="#fff" stroke="#888" /><path d="M.5 16.500h8" stroke="#888" strokeDasharray="1 1" /><path d="M11 14h6M14 11v6" stroke="#888" strokeWidth="2" /></svg></FlashFill>

      <Poster>
        <PosterLine $h={161} $pl={102}>
          {Line1.map(([t, w, sx, sy]) => <Glyph key={t} data-t={t} $w={w} $sx={sx} $sy={sy}>{t}</Glyph>)}
        </PosterLine>
        <PosterLine $h={168} $pl={9}>
          {Line2.map(([t, w, sx, sy]) => <Glyph key={t} data-t={t} $w={w} $sx={sx} $sy={sy} $size={t === '?' ? 170 : 142}>{t}</Glyph>)}
        </PosterLine>
      </Poster>

      <SheetTabs>
        <SheetTab $w={7} />
        <SheetTab $w={92}>Sheet51</SheetTab>
        <SheetTab $w={92}>Sheet52</SheetTab>
        <SheetTab $w={160}>多个项目算总工资</SheetTab>
        <SheetTab $w={109}>奇葩的符号</SheetTab>
        <SheetTab $w={31} $pl={6}>E-</SheetTab>
        <SheetTab $w={153} $pl={8}>不规则行数求和</SheetTab>
        <SheetTab $w={92}>按行拆分</SheetTab>
        <SheetTab $w={109}>正数平均值</SheetTab>
        <ActiveTab>公式求值</ActiveTab>
        <AddTab><svg width="20" height="20" viewBox="0 0 20 20"><circle cx="10" cy="10" r="9" fill="none" stroke="#888" strokeWidth="1.200" /><path d="M10 5v10M5 10h10" stroke="#888" strokeWidth="1.800" /></svg></AddTab>
        <ScrollGrip><svg width="3" height="14" viewBox="0 0 3 14"><rect width="3" height="3" fill="#aaa" /><rect y="5.500" width="3" height="3" fill="#aaa" /><rect y="11" width="3" height="3" fill="#aaa" /></svg></ScrollGrip>
        <ScrollBar><ScrollArrow><svg width="6" height="10" viewBox="0 0 6 10"><path d="M6 0v10L0 5z" fill="#555" /></svg></ScrollArrow></ScrollBar>
      </SheetTabs>

      <Status>
        <StatusLeft>
          <svg width="19" height="18" viewBox="0 0 19 18"><path d="M7 2a7 7 0 1 0 6 12" fill="none" stroke="#777" /><path d="M7 0v6M5 9l4-2 4 2M10 9l7 8M17 9l-8 8" fill="none" stroke="#444" strokeWidth="1.600" /></svg>
          <span>辅助功能: 调查</span>
        </StatusLeft>
        <ViewBtn $w={50} $on><svg width="17" height="17" viewBox="0 0 17 17"><path d="M.5.5h16v16H.5zM5.800.5v16M11.200.5v16M.5 5.800h16M.5 11.200h16" fill="none" stroke="#666" /></svg></ViewBtn>
        <ViewBtn $w={49}><svg width="17" height="17" viewBox="0 0 17 17"><path d="M.5.5h16v16H.5zM5 5h7M5 8.500h7M5 12h7" fill="none" stroke="#666" /><path d="M3.500 3.500h10v10h-10z" fill="none" stroke="#999" /></svg></ViewBtn>
        <Ime>
          <SLogo size={38} />
          <ImeText>英</ImeText>
          <ImeSlot $w={20}><svg width="16" height="18" viewBox="0 0 16 18"><circle cx="3" cy="5" r="2" fill="#1f6fc0" /><path d="M12 9c2 0 2 4-2 7" fill="none" stroke="#1f6fc0" strokeWidth="2.500" /></svg></ImeSlot>
          <ImeSlot $w={40}><svg width="20" height="20" viewBox="0 0 20 20"><circle cx="10" cy="10" r="9.500" fill="#1f6fc0" /><circle cx="7" cy="8" r="1.500" fill="#fff" /><circle cx="13" cy="8" r="1.500" fill="#fff" /><path d="M5 12c2 4 8 4 10 0z" fill="#fff" /></svg></ImeSlot>
          <ImeSlot $w={22}><svg width="16" height="22" viewBox="0 0 16 22"><rect x="4" y="0" width="8" height="14" rx="4" fill="#1f6fc0" /><path d="M1 10c0 5 3 7 7 7s7-2 7-7M8 17v4" fill="none" stroke="#1f6fc0" strokeWidth="1.400" /></svg></ImeSlot>
          <ImeSlot $w={38}><svg width="24" height="18" viewBox="0 0 24 18"><rect width="24" height="18" rx="3" fill="#1f6fc0" /><path d="M3 5h18M3 9h18M6 13h12" stroke="#fff" strokeWidth="2" strokeDasharray="2 1" /></svg></ImeSlot>
        </Ime>
      </Status>

      <Taskbar>
        <ChromeBtn $w={24} $mr={6}><svg width="24" height="26" viewBox="0 0 26 26"><circle cx="13" cy="13" r="12" fill="#e33b2e" /><path d="M13 13 24 7v12z" fill="#fbc116" /><path d="M13 13 3 18a12 12 0 0 0 14 6z" fill="#2ea44f" /><circle cx="13" cy="13" r="5" fill="#4a8fe7" stroke="#fff" strokeWidth="2" /></svg></ChromeBtn>
        <TaskBtn $w={61} $on><svg width="30" height="30" viewBox="0 0 30 30"><rect x="9" y="2" width="20" height="26" rx="1" fill="#1f8a53" /><rect x="19" y="2" width="10" height="9" fill="#33c481" /><rect x="19" y="11" width="10" height="8" fill="#21a366" /><rect x="1" y="8" width="14" height="14" rx="1" fill="#107c41" /><text x="8" y="19" textAnchor="middle" fontFamily="Liberation Sans" fontWeight="700" fontSize="11" fill="#fff">x</text></svg></TaskBtn>
        <Tray>
          {trayIcons.map((ic, i) => <TraySlot key={i} $w={i === 15 ? 40 : 30}>{ic}</TraySlot>)}
          <TraySlot $w={30}>英</TraySlot>
          <TraySlot $w={40}><SLogo size={22} /></TraySlot>
        </Tray>
      </Taskbar>
    </Page>
  );
}
